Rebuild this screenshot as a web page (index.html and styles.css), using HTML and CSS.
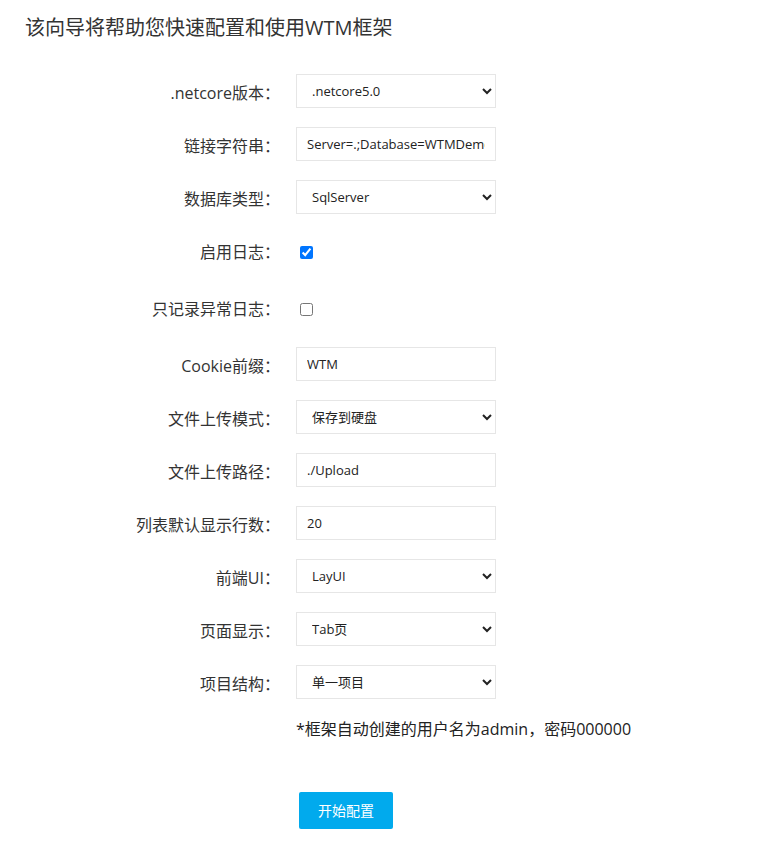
FILE: index.html
```html
<!DOCTYPE html>
<html lang="zh-CN">
<head>
<meta charset="utf-8">
<title>WTM</title>
<link rel="stylesheet" href="styles.css">
</head>
<body>
<div class="page">
  <h2 class="title">该向导将帮助您快速配置和使用WTM框架</h2>
  <form class="form">
    <div class="row">
      <label class="label">.netcore版本：</label>
      <div class="field">
        <select class="select"><option>.netcore5.0</option></select>
      </div>
    </div>
    <div class="row">
      <label class="label">链接字符串：</label>
      <div class="field">
        <input class="input" type="text" value="Server=.;Database=WTMDemo;Trusted_Connection=True;">
      </div>
    </div>
    <div class="row">
      <label class="label">数据库类型：</label>
      <div class="field">
        <select class="select"><option>SqlServer</option></select>
      </div>
    </div>
    <div class="row row-check">
      <label class="label">启用日志：</label>
      <div class="field field-check">
        <input class="check" type="checkbox" checked>
      </div>
    </div>
    <div class="row row-check">
      <label class="label">只记录异常日志：</label>
      <div class="field field-check">
        <input class="check" type="checkbox">
      </div>
    </div>
    <div class="row">
      <label class="label">Cookie前缀：</label>
      <div class="field">
        <input class="input" type="text" value="WTM">
      </div>
    </div>
    <div class="row">
      <label class="label">文件上传模式：</label>
      <div class="field">
        <select class="select"><option>保存到硬盘</option></select>
      </div>
    </div>
    <div class="row">
      <label class="label">文件上传路径：</label>
      <div class="field">
        <input class="input" type="text" value="./Upload">
      </div>
    </div>
    <div class="row">
      <label class="label">列表默认显示行数：</label>
      <div class="field">
        <input class="input" type="text" value="20">
      </div>
    </div>
    <div class="row">
      <label class="label">前端UI：</label>
      <div class="field">
        <select class="select"><option>LayUI</option></select>
      </div>
    </div>
    <div class="row">
      <label class="label">页面显示：</label>
      <div class="field">
        <select class="select"><option>Tab页</option></select>
      </div>
    </div>
    <div class="row">
      <label class="label">项目结构：</label>
      <div class="field">
        <select class="select"><option>单一项目</option></select>
      </div>
    </div>
    <p class="note">*框架自动创建的用户名为admin，密码000000</p>
    <div class="actions">
      <button class="btn" type="button">开始配置</button>
    </div>
  </form>
</div>
</body>
</html>
```

FILE: styles.css
```css
html, body {
  margin: 0;
  padding: 0;
  background: #fff;
}

body {
  font-family: "Open Sans", "Noto Sans CJK SC", sans-serif;
  color: #333;
}

.page {
  padding: 14px 0 0 0;
}

.title {
  margin: 0 0 32px 25px;
  font-size: 20px;
  line-height: 28px;
  font-weight: 400;
  color: #333;
}

.form {
  display: flex;
  flex-direction: column;
}

.row {
  display: flex;
  align-items: flex-start;
  margin-bottom: 15px;
}

.label {
  box-sizing: border-box;
  width: 280px;
  padding: 9px 0;
  line-height: 20px;
  font-size: 16px;
  text-align: right;
  color: #333;
}

.field {
  margin-left: 16px;
}

.field-check {
  height: 42px;
}

.input,
.select {
  box-sizing: border-box;
  width: 200px;
  height: 34px;
  margin: 0;
  border: 1px solid #e6e6e6;
  border-radius: 0;
  background: #fff;
  font-family: "Open Sans", "Noto Sans CJK SC", sans-serif;
  font-size: 13px;
  color: #222;
  outline: none;
}

.input {
  padding: 0 10px;
}

.select {
  padding: 0 6px 0 11px;
}

.check {
  width: 13px;
  height: 13px;
  margin: 13px 0 0 4px;
}

.note {
  margin: 1px 0 0 296px;
  font-size: 16px;
  line-height: 20px;
  color: #222;
}

.actions {
  margin: 53px 0 0 299px;
}

.btn {
  width: 94px;
  height: 37px;
  padding: 0;
  border: none;
  border-radius: 2px;
  background: #01aaed;
  color: #fff;
  font-family: "Open Sans", "Noto Sans CJK SC", sans-serif;
  font-size: 14px;
  line-height: 37px;
  cursor: pointer;
}
```
